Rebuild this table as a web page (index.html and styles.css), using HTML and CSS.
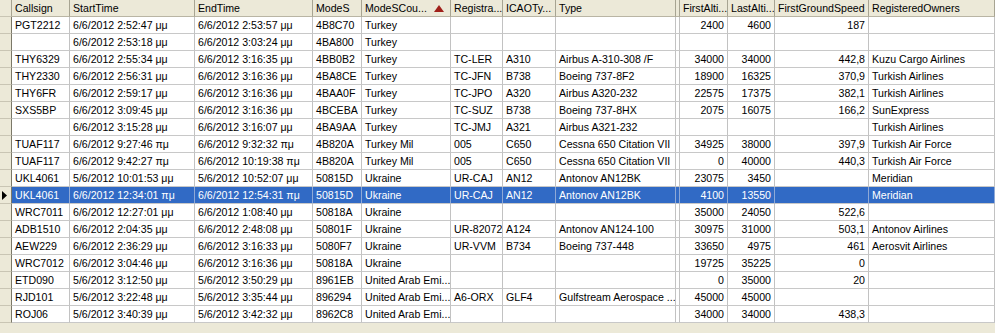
FILE: index.html
```html
<!DOCTYPE html>
<html>
<head>
<meta charset="utf-8">
<link rel="stylesheet" href="styles.css">
</head>
<body>
<div class="grid">
  <div class="r hd"><span class="h"></span><span>Callsign</span><span>StartTime</span><span>EndTime</span><span>ModeS</span><span class="sort">ModeSCou...<svg class="tri" width="10" height="7" viewBox="0 0 10 7"><polygon points="5,0 10,7 0,7"/></svg></span><span>Registra...</span><span>ICAOTy...</span><span>Type</span><span class="d"></span><span>FirstAlti...</span><span>LastAlti...</span><span>FirstGroundSpeed</span><span>RegisteredOwners</span></div>

  <div class="r"><span class="h"></span><span>PGT2212</span><span>6/6/2012 2:52:47 μμ</span><span>6/6/2012 2:53:57 μμ</span><span>4B8C70</span><span>Turkey</span><span></span><span></span><span></span><span class="d"></span><span class="n">2400</span><span class="n">4600</span><span class="n">187</span><span></span></div>
  <div class="r"><span class="h"></span><span></span><span>6/6/2012 2:53:18 μμ</span><span>6/6/2012 3:03:24 μμ</span><span>4BA800</span><span>Turkey</span><span></span><span></span><span></span><span class="d"></span><span class="n"></span><span class="n"></span><span class="n"></span><span></span></div>
  <div class="r"><span class="h"></span><span>THY6329</span><span>6/6/2012 2:55:34 μμ</span><span>6/6/2012 3:16:35 μμ</span><span>4BB0B2</span><span>Turkey</span><span>TC-LER</span><span>A310</span><span>Airbus A-310-308 /F</span><span class="d"></span><span class="n">34000</span><span class="n">34000</span><span class="n">442,8</span><span>Kuzu Cargo Airlines</span></div>
  <div class="r"><span class="h"></span><span>THY2330</span><span>6/6/2012 2:56:31 μμ</span><span>6/6/2012 3:16:36 μμ</span><span>4BA8CE</span><span>Turkey</span><span>TC-JFN</span><span>B738</span><span>Boeing 737-8F2</span><span class="d"></span><span class="n">18900</span><span class="n">16325</span><span class="n">370,9</span><span>Turkish Airlines</span></div>
  <div class="r"><span class="h"></span><span>THY6FR</span><span>6/6/2012 2:59:17 μμ</span><span>6/6/2012 3:16:36 μμ</span><span>4BAA0F</span><span>Turkey</span><span>TC-JPO</span><span>A320</span><span>Airbus A320-232</span><span class="d"></span><span class="n">22575</span><span class="n">17375</span><span class="n">382,1</span><span>Turkish Airlines</span></div>
  <div class="r"><span class="h"></span><span>SXS5BP</span><span>6/6/2012 3:09:45 μμ</span><span>6/6/2012 3:16:36 μμ</span><span>4BCEBA</span><span>Turkey</span><span>TC-SUZ</span><span>B738</span><span>Boeing 737-8HX</span><span class="d"></span><span class="n">2075</span><span class="n">16075</span><span class="n">166,2</span><span>SunExpress</span></div>
  <div class="r"><span class="h"></span><span></span><span>6/6/2012 3:15:28 μμ</span><span>6/6/2012 3:16:07 μμ</span><span>4BA9AA</span><span>Turkey</span><span>TC-JMJ</span><span>A321</span><span>Airbus A321-232</span><span class="d"></span><span class="n"></span><span class="n"></span><span class="n"></span><span>Turkish Airlines</span></div>
  <div class="r"><span class="h"></span><span>TUAF117</span><span>6/6/2012 9:27:46 πμ</span><span>6/6/2012 9:32:32 πμ</span><span>4B820A</span><span>Turkey Mil</span><span>005</span><span>C650</span><span>Cessna 650 Citation VII</span><span class="d"></span><span class="n">34925</span><span class="n">38000</span><span class="n">397,9</span><span>Turkish Air Force</span></div>
  <div class="r"><span class="h"></span><span>TUAF117</span><span>6/6/2012 9:42:27 πμ</span><span>6/6/2012 10:19:38 πμ</span><span>4B820A</span><span>Turkey Mil</span><span>005</span><span>C650</span><span>Cessna 650 Citation VII</span><span class="d"></span><span class="n">0</span><span class="n">40000</span><span class="n">440,3</span><span>Turkish Air Force</span></div>
  <div class="r"><span class="h"></span><span>UKL4061</span><span>5/6/2012 10:01:53 μμ</span><span>5/6/2012 10:52:07 μμ</span><span>50815D</span><span>Ukraine</span><span>UR-CAJ</span><span>AN12</span><span>Antonov AN12BK</span><span class="d"></span><span class="n">23075</span><span class="n">3450</span><span class="n"></span><span>Meridian</span></div>
  <div class="r sel"><span class="h"><svg class="cur" width="6" height="9" viewBox="0 0 6 9"><polygon points="0,0 5,4.5 0,9"/></svg></span><span>UKL4061</span><span>6/6/2012 12:34:01 πμ</span><span>6/6/2012 12:54:31 πμ</span><span>50815D</span><span>Ukraine</span><span>UR-CAJ</span><span>AN12</span><span>Antonov AN12BK</span><span class="d"></span><span class="n">4100</span><span class="n">13550</span><span class="n"></span><span>Meridian</span></div>
  <div class="r"><span class="h"></span><span>WRC7011</span><span>6/6/2012 12:27:01 μμ</span><span>6/6/2012 1:08:40 μμ</span><span>50818A</span><span>Ukraine</span><span></span><span></span><span></span><span class="d"></span><span class="n">35000</span><span class="n">24050</span><span class="n">522,6</span><span></span></div>
  <div class="r"><span class="h"></span><span>ADB1510</span><span>6/6/2012 2:04:35 μμ</span><span>6/6/2012 2:48:08 μμ</span><span>50801F</span><span>Ukraine</span><span>UR-82072</span><span>A124</span><span>Antonov AN124-100</span><span class="d"></span><span class="n">30975</span><span class="n">31000</span><span class="n">503,1</span><span>Antonov Airlines</span></div>
  <div class="r"><span class="h"></span><span>AEW229</span><span>6/6/2012 2:36:29 μμ</span><span>6/6/2012 3:16:33 μμ</span><span>5080F7</span><span>Ukraine</span><span>UR-VVM</span><span>B734</span><span>Boeing 737-448</span><span class="d"></span><span class="n">33650</span><span class="n">4975</span><span class="n">461</span><span>Aerosvit Airlines</span></div>
  <div class="r"><span class="h"></span><span>WRC7012</span><span>6/6/2012 3:04:46 μμ</span><span>6/6/2012 3:16:36 μμ</span><span>50818A</span><span>Ukraine</span><span></span><span></span><span></span><span class="d"></span><span class="n">19725</span><span class="n">35225</span><span class="n">0</span><span></span></div>
  <div class="r"><span class="h"></span><span>ETD090</span><span>5/6/2012 3:12:50 μμ</span><span>5/6/2012 3:50:29 μμ</span><span>8961EB</span><span>United Arab Emi...</span><span></span><span></span><span></span><span class="d"></span><span class="n">0</span><span class="n">35000</span><span class="n">20</span><span></span></div>
  <div class="r"><span class="h"></span><span>RJD101</span><span>5/6/2012 3:22:48 μμ</span><span>5/6/2012 3:35:44 μμ</span><span>896294</span><span>United Arab Emi...</span><span>A6-ORX</span><span>GLF4</span><span>Gulfstream Aerospace ...</span><span class="d"></span><span class="n">45000</span><span class="n">45000</span><span class="n"></span><span></span></div>
  <div class="r"><span class="h"></span><span>ROJ06</span><span>5/6/2012 3:40:39 μμ</span><span>5/6/2012 3:42:32 μμ</span><span>8962C8</span><span>United Arab Emi...</span><span></span><span></span><span></span><span class="d"></span><span class="n">34000</span><span class="n">34000</span><span class="n">438,3</span><span></span></div>
</div>
</body>
</html>
```
FILE: styles.css
```css
html, body {
  margin: 0;
  padding: 0;
}
body {
  background: #ece9d8;
  font-family: "Liberation Sans", Arial, sans-serif;
  font-size: 10.6px;
  color: #000;
  width: 995px;
  height: 333px;
  overflow: hidden;
}
.grid {
  display: flex;
  flex-direction: column;
}
.r {
  display: grid;
  grid-template-columns: 12px 58px 125px 118px 49px 89px 52px 53px 120px 4px 48px 47px 94px 126px;
  height: 17px;
}
.r > span {
  box-sizing: border-box;
  height: 17px;
  border-right: 1px solid #c2c2c2;
  border-bottom: 1px solid #c8c8c8;
  background: #fff;
  padding: 0 3px;
  line-height: 16px;
  white-space: nowrap;
  overflow: hidden;
}
.r > .d {
  padding: 0;
}
.r > .h {
  background: #ece9d8;
  border-right: 1px solid #7b7868;
  border-bottom: 1px solid #c9c5b4;
  padding: 0;
  display: flex;
  align-items: center;
}
.n {
  text-align: right;
}
.hd > span {
  background: #ece9d8;
  border-right: 1px solid #a7a492;
  border-bottom: 1px solid #b9b5a4;
}
.hd > .h {
  border-right: 1px solid #a7a492;
}
.sort {
  display: flex;
  align-items: center;
  justify-content: space-between;
}
.tri {
  fill: #a0201a;
  margin-right: 3px;
  flex: none;
}
.sel > span {
  background: #316ac5;
  color: #fff;
  border-right-color: #8fa9d6;
}
.sel > .h {
  background: #ece9d8;
  border-right-color: #7b7868;
}
.cur {
  fill: #000;
  margin-left: 2px;
}
```
